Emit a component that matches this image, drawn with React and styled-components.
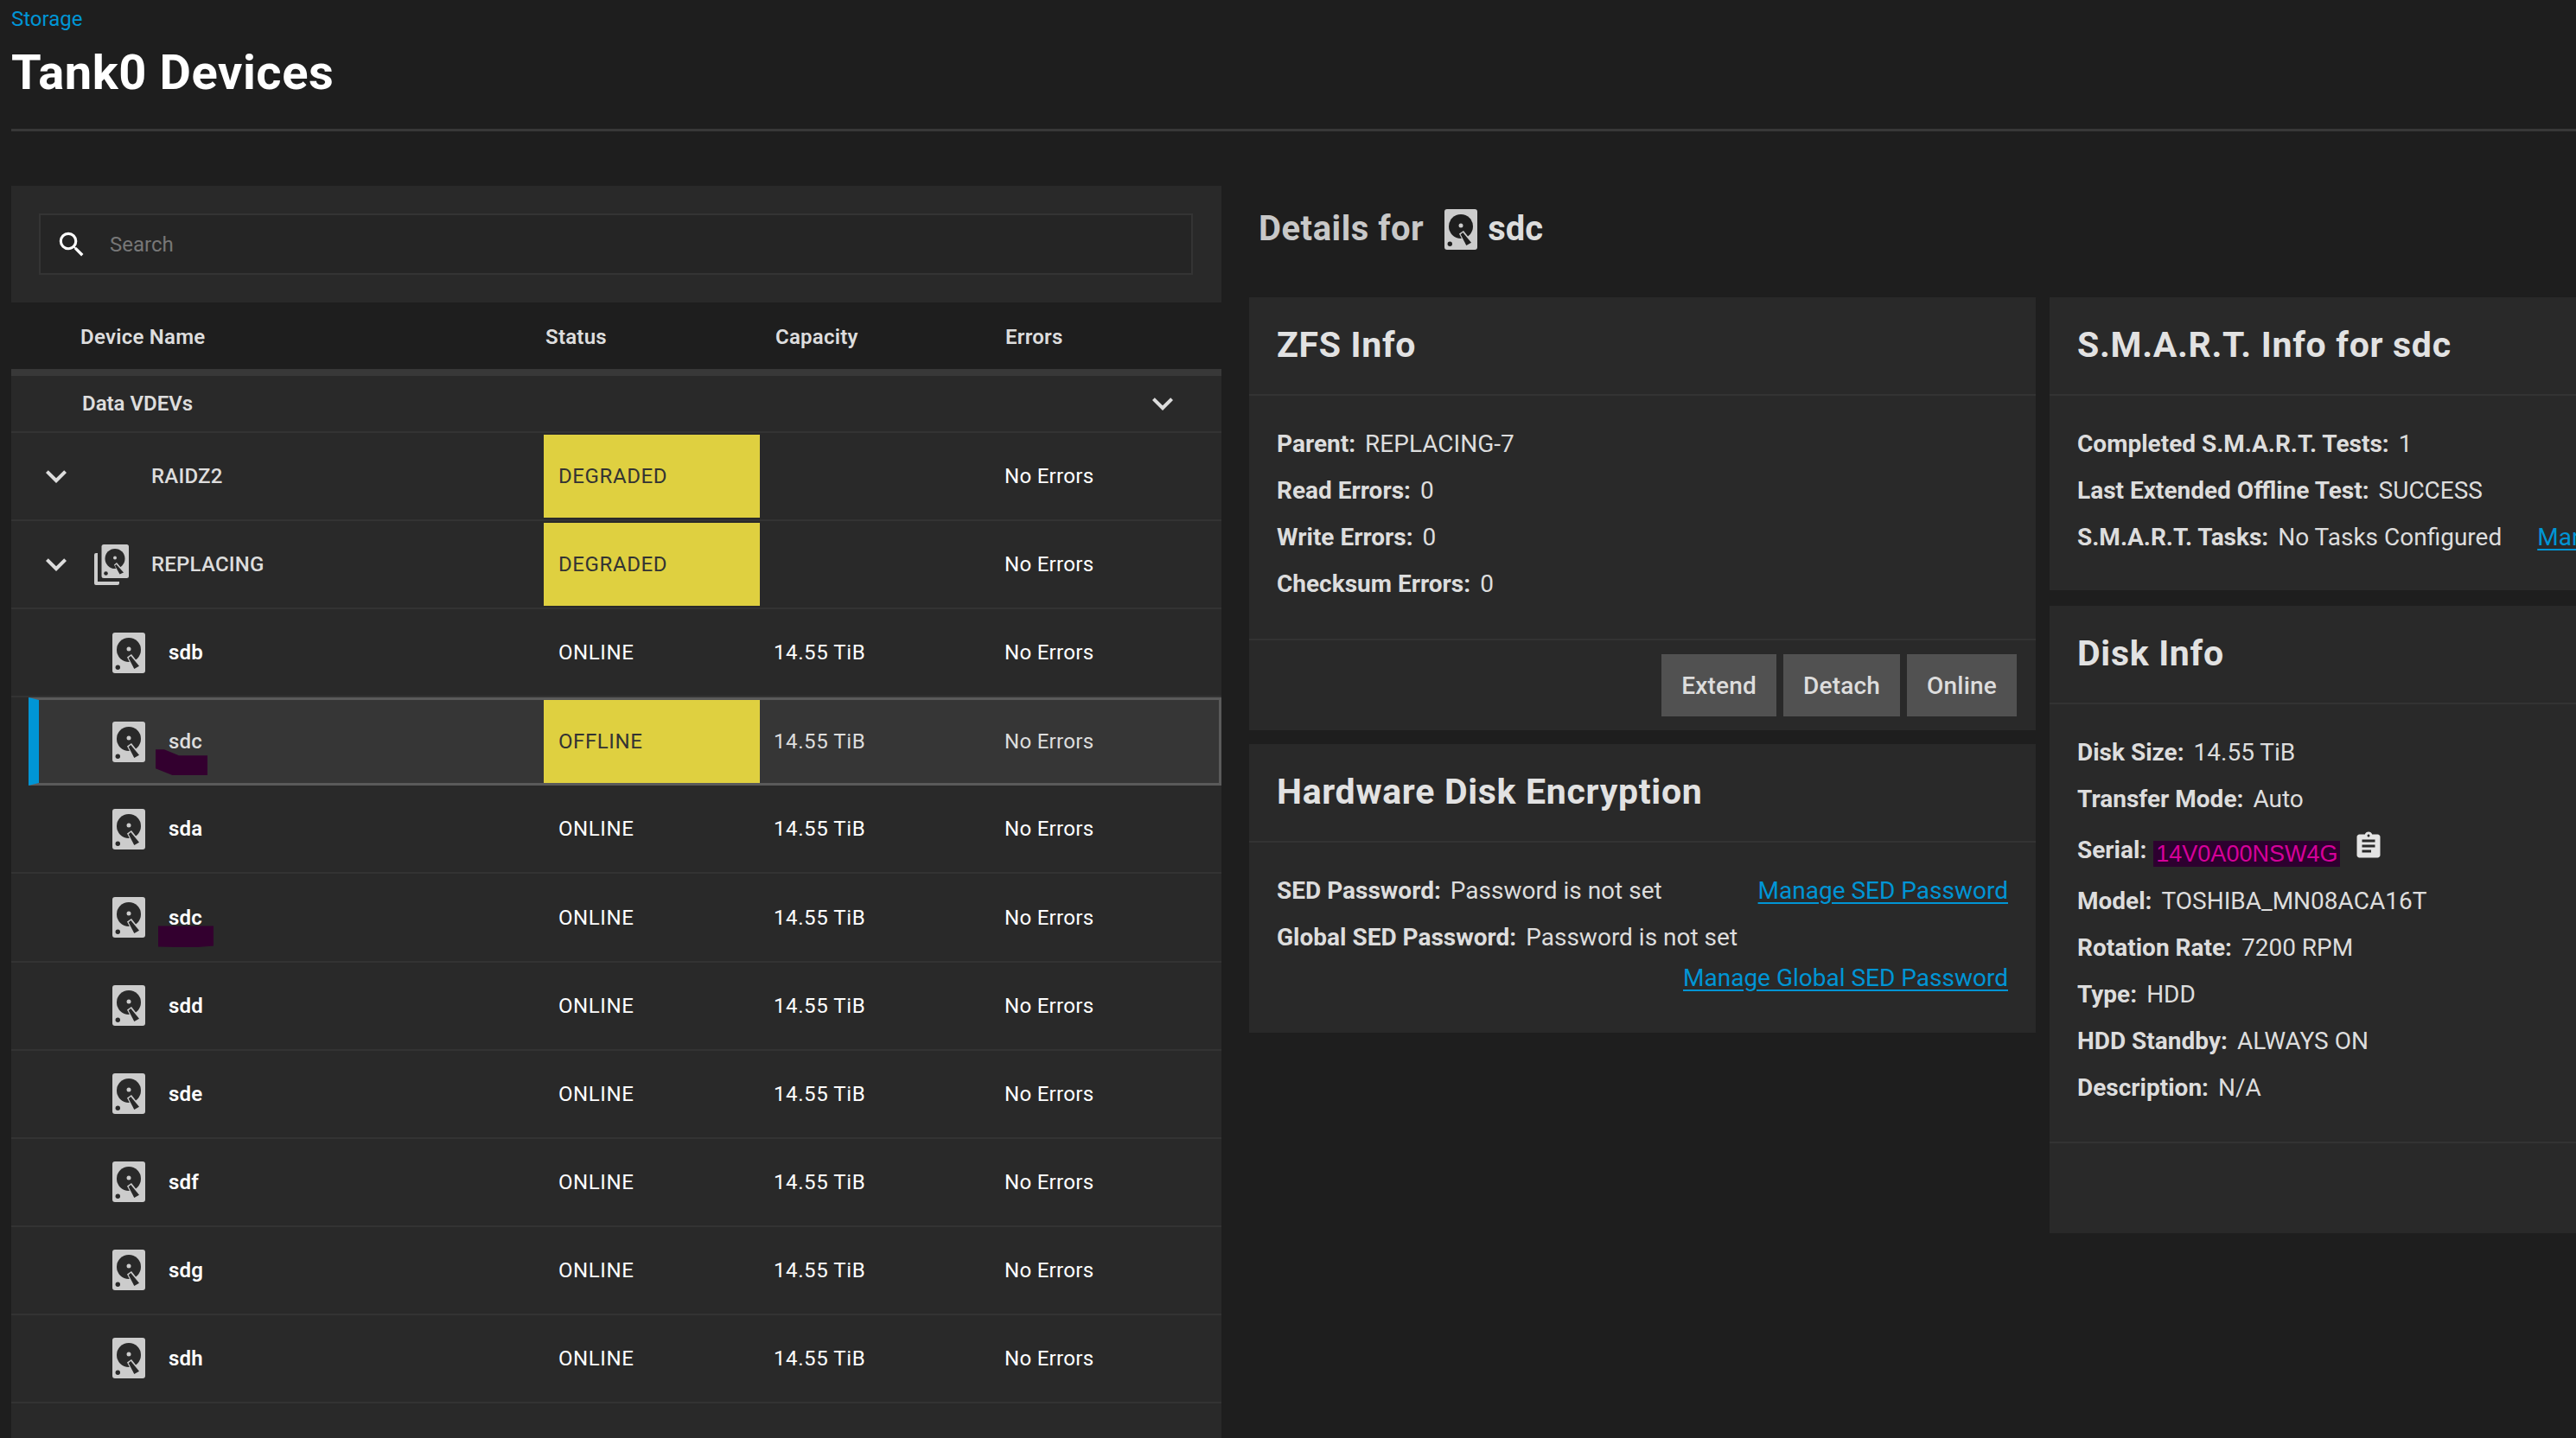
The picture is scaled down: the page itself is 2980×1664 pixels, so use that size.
import React from "react";
import styled, { createGlobalStyle } from "styled-components";
import { MdSearch, MdKeyboardArrowDown, MdAssignment } from "react-icons/md";

const Global = createGlobalStyle`
  html, body { margin: 0; padding: 0; background: #1e1e1e; }
  body { font-family: Roboto, "Liberation Sans", sans-serif; color: #ddd; }
  * { box-sizing: border-box; }
`;

const Page = styled.div`
  width: 2980px;
  height: 1664px;
  overflow: hidden;
  padding-left: 13px;
  background: #1e1e1e;
`;
const Crumb = styled.a`
  display: block;
  padding-top: 8px;
  height: 36px;
  line-height: 28px;
  font-size: 24px;
  color: #0095d5;
`;
const Title = styled.h1`
  margin: 16px 0 0;
  height: 64px;
  line-height: 64px;
  font-size: 56px;
  font-weight: 700;
  letter-spacing: 0.6px;
  color: #fff;
`;
const Divider = styled.div`
  margin-top: 33px;
  height: 3px;
  background: #383838;
`;
const Main = styled.div`
  margin-top: 63px;
  display: flex;
  gap: 32px;
  height: 1449px;
`;
const LeftPanel = styled.section`
  flex: 0 0 1400px;
  display: flex;
  flex-direction: column;
  background: #292929;
`;
const SearchBar = styled.div`
  height: 135px;
  padding: 32px;
`;
const SearchBox = styled.div`
  width: 1335px;
  height: 71px;
  display: flex;
  align-items: center;
  border: 2px solid #343434;
  background: #252525;
  color: #fff;
  padding-left: 17px;
  gap: 25px;
  font-size: 24px;
  svg { flex: none; }
`;
const Placeholder = styled.span`
  color: #777;
`;
const Grid = styled.div`
  display: grid;
  grid-template-columns: ${(p) => (p.$selected ? "584px" : "616px")} 250px 267px 1fr;
`;
const HeadRow = styled(Grid)`
  height: 85px;
  padding-top: 3px;
  background: #1e1e1e;
  border-bottom: 8px solid #383838;
  align-items: center;
  font-size: 24px;
  font-weight: 600;
  letter-spacing: 0.25px;
  color: #ddd;
`;
const HeadCell = styled.div`
  padding-left: ${(p) => p.$pad}px;
`;
const GroupRow = styled.div`
  height: 66px;
  display: flex;
  align-items: center;
  justify-content: space-between;
  padding: 0 44px 0 82px;
  border-bottom: 2px solid #333;
  font-size: 24px;
  font-weight: 600;
  color: #ddd;
`;
const Row = styled(Grid)`
  height: 102.1px;
  margin-left: ${(p) => (p.$selected ? "20px" : "0")};
  border-bottom: 2px solid #333;
  font-size: 24px;
  color: ${(p) => (p.$selected ? "#ddd" : "#fff")};
  background: ${(p) => (p.$selected ? "#363636" : "transparent")};
  ${(p) =>
    p.$selected &&
    `border-top: 3px solid #5a5a5a; border-right: 3px solid #5a5a5a; border-bottom: 3px solid #5a5a5a; border-left: 12px solid #0095d5;`}
`;
const NameCell = styled.div`
  position: relative;
  display: flex;
  align-items: center;
  padding-left: ${(p) => p.$pad}px;
  font-weight: ${(p) => p.$weight};
  letter-spacing: 0.2px;
  color: ${(p) => p.$color};
`;
const Caret = styled.span`
  display: flex;
  width: 48px;
  margin-right: ${(p) => p.$gap}px;
  color: #ddd;
`;
const IconSlot = styled.span`
  display: flex;
  margin-right: ${(p) => p.$gap}px;
`;
const Redact = styled.span`
  position: absolute;
  left: ${(p) => p.$x}px;
  top: ${(p) => p.$y}px;
  width: ${(p) => p.$w}px;
  height: ${(p) => p.$h}px;
  background: #33002f;
  clip-path: polygon(${(p) => p.$shape});
`;
const StatusCell = styled.div`
  display: flex;
  align-items: center;
  padding-left: 17px;
  letter-spacing: 0.6px;
  color: ${(p) => (p.$warn ? "#333" : "inherit")};
  background: ${(p) => (p.$warn ? "#dfd040" : "transparent")};
  margin: ${(p) => (p.$warn && !p.$selected ? "2px 0 2px" : "0")};
`;
const Cell = styled.div`
  display: flex;
  align-items: center;
  padding-left: 16px;
  letter-spacing: ${(p) => p.$track || 0.3}px;
`;
const RightPanel = styled.section`
  flex: none;
  width: 1700px;
`;
const DetailsTitle = styled.div`
  height: 129px;
  padding: 25px 0 0 11px;
  display: flex;
  align-items: flex-start;
  font-size: 40px;
  font-weight: 700;
  letter-spacing: 0.5px;
  color: #c8c8c8;
  line-height: 50px;
`;
const DetailsName = styled.span`
  display: flex;
  align-items: center;
  gap: 12px;
  margin-left: 24px;
  color: #ddd;
  letter-spacing: 0;
`;
const Columns = styled.div`
  display: flex;
  gap: 16px;
  align-items: flex-start;
`;
const Column = styled.div`
  flex: 0 0 ${(p) => p.$w}px;
  display: flex;
  flex-direction: column;
  gap: ${(p) => p.$gap}px;
`;
const Card = styled.article`
  background: #292929;
`;
const CardHead = styled.h2`
  margin: 0;
  height: 114px;
  line-height: 110px;
  padding-left: 32px;
  border-bottom: 2px solid #333;
  font-size: 41px;
  font-weight: 700;
  letter-spacing: 0.7px;
  color: #e2e2e2;
`;
const CardBody = styled.div`
  padding: 28px 32px ${(p) => p.$bottom}px;
  font-size: 28px;
  color: #ddd;
`;
const Line = styled.div`
  height: ${(p) => p.$h || 54}px;
  display: flex;
  align-items: center;
  white-space: nowrap;
  justify-content: ${(p) => p.$justify || "flex-start"};
`;
const Label = styled.strong`
  font-weight: 700;
  margin-right: 11px;
`;
const TextLink = styled.a`
  color: #0095d5;
  text-decoration: underline;
  text-underline-offset: 4px;
  margin-left: ${(p) => p.$gap || 0}px;
  white-space: nowrap;
`;
const Serial = styled.span`
  position: relative;
  top: 5px;
  margin-left: -3px;
  padding: 0 3px;
  background: #2d002f;
  color: #d6009a;
  font-size: 27px;
  line-height: 30px;
  font-family: "Liberation Sans", sans-serif;
`;
const Copy = styled.span`
  display: flex;
  margin-left: 15px;
  position: relative;
  top: -4px;
  color: #e4e4e4;
`;
const CardFoot = styled.div`
  height: ${(p) => p.$h}px;
  border-top: 2px solid #333;
  display: flex;
  justify-content: flex-end;
  gap: 8px;
  padding: 16px 22px 0 0;
`;
const Btn = styled.button`
  height: 72px;
  padding: 0 23px;
  border: 0;
  background: #515151;
  color: #ddd;
  letter-spacing: 0.2px;
  font: 500 28px Roboto, sans-serif;
`;

const DiskIcon = ({ hole = "#292929" }) => (
  <svg width="38" height="47" viewBox="0 0 38 47">
    <rect width="38" height="47" rx="3" fill="#ccc" />
    <circle cx="19" cy="20" r="14" fill={hole} />
    <circle cx="19" cy="19" r="2.5" fill="#ccc" />
    <polygon points="17,28.5 22,25 33,39 25,44" fill="#ccc" />
    <polygon points="21.3,27 31,38.7 25.3,42 18.7,29.3" fill={hole} />
    <circle cx="6.3" cy="40.3" r="2.7" fill={hole} />
  </svg>
);

const StackIcon = () => (
  <svg width="40" height="47" viewBox="0 0 40 47">
    <path d="M0 12a2 2 0 0 1 2-2h2v33h25v2a2 2 0 0 1-2 2H2a2 2 0 0 1-2-2z" fill="#ccc" />
    <rect x="8.5" width="31.5" height="39" rx="2.5" fill="#ccc" />
    <circle cx="24" cy="16.5" r="11.5" fill="#292929" />
    <circle cx="24" cy="15.5" r="2" fill="#ccc" />
    <polygon points="23,23.5 26,21 36,33 29,36" fill="#ccc" />
    <polygon points="25.5,23 34,32.5 29.5,34.5 24,24.5" fill="#292929" />
    <circle cx="13.5" cy="33.5" r="2.3" fill="#292929" />
  </svg>
);

const disks = [
  { name: "sdb", status: "ONLINE" },
  { name: "sdc", status: "OFFLINE", selected: true },
  { name: "sda", status: "ONLINE" },
  { name: "sdc", status: "ONLINE", mark: true },
  { name: "sdd", status: "ONLINE" },
  { name: "sde", status: "ONLINE" },
  { name: "sdf", status: "ONLINE" },
  { name: "sdg", status: "ONLINE" },
  { name: "sdh", status: "ONLINE" },
];

const Field = ({ k, v }) => (
  <Line>
    <Label>{k}</Label>
    {v}
  </Line>
);

export default function App() {
  return (
    <Page>
      <Global />
      <Crumb>Storage</Crumb>
      <Title>Tank0 Devices</Title>
      <Divider />
      <Main>
        <LeftPanel>
          <SearchBar>
            <SearchBox>
              <MdSearch size={38} />
              <Placeholder>Search</Placeholder>
            </SearchBox>
          </SearchBar>
          <HeadRow>
            <HeadCell $pad={80}>Device Name</HeadCell>
            <HeadCell $pad={2}>Status</HeadCell>
            <HeadCell $pad={18}>Capacity</HeadCell>
            <HeadCell $pad={17}>Errors</HeadCell>
          </HeadRow>
          <GroupRow>
            Data VDEVs
            <MdKeyboardArrowDown size={48} color="#ddd" />
          </GroupRow>
          <Row>
            <NameCell $pad={28} $weight={500} $color="#ddd">
              <Caret $gap={86}><MdKeyboardArrowDown size={48} /></Caret>
              RAIDZ2
            </NameCell>
            <StatusCell $warn>DEGRADED</StatusCell>
            <Cell />
            <Cell>No Errors</Cell>
          </Row>
          <Row>
            <NameCell $pad={28} $weight={500} $color="#ddd">
              <Caret $gap={20}><MdKeyboardArrowDown size={48} /></Caret>
              <IconSlot $gap={26}><StackIcon /></IconSlot>
              REPLACING
            </NameCell>
            <StatusCell $warn>DEGRADED</StatusCell>
            <Cell />
            <Cell>No Errors</Cell>
          </Row>
          {disks.map((d, i) => (
            <Row key={i} $selected={d.selected}>
              <NameCell $pad={d.selected ? 85 : 117} $weight={d.selected ? 500 : 600}>
                <IconSlot $gap={27}><DiskIcon /></IconSlot>
                {d.name}
                {d.selected && <Redact $x={135} $y={57} $w={60} $h={30} $shape="0 0, 10px 0, 27px 7px, 60px 7px, 60px 30px, 20px 30px, 0 22px" />}
                {d.mark && <Redact $x={170} $y={60} $w={64} $h={25} $shape="0 0, 64px 0, 64px 23px, 40px 25px, 0 24px" />}
              </NameCell>
              <StatusCell $warn={d.status === "OFFLINE"} $selected={d.selected}>{d.status}</StatusCell>
              <Cell $track={0.6}>14.55 TiB</Cell>
              <Cell>No Errors</Cell>
            </Row>
          ))}
        </LeftPanel>
        <RightPanel>
          <DetailsTitle>
            Details for
            <DetailsName><DiskIcon hole="#1e1e1e" />sdc</DetailsName>
          </DetailsTitle>
          <Columns>
            <Column $w={910} $gap={16}>
              <Card>
                <CardHead>ZFS Info</CardHead>
                <CardBody $bottom={37}>
                  <Field k="Parent:" v="REPLACING-7" />
                  <Field k="Read Errors:" v="0" />
                  <Field k="Write Errors:" v="0" />
                  <Field k="Checksum Errors:" v="0" />
                </CardBody>
                <CardFoot $h={106}>
                  <Btn>Extend</Btn>
                  <Btn>Detach</Btn>
                  <Btn>Online</Btn>
                </CardFoot>
              </Card>
              <Card>
                <CardHead>Hardware Disk Encryption</CardHead>
                <CardBody $bottom={44}>
                  <Line $justify="space-between">
                    <span><Label>SED Password:</Label>Password is not set</span>
                    <TextLink>Manage SED Password</TextLink>
                  </Line>
                  <Field k="Global SED Password:" v="Password is not set" />
                  <Line $h={40} $justify="flex-end">
                    <TextLink>Manage Global SED Password</TextLink>
                  </Line>
                </CardBody>
              </Card>
            </Column>
            <Column $w={700} $gap={18}>
              <Card>
                <CardHead>S.M.A.R.T. Info for sdc</CardHead>
                <CardBody $bottom={35}>
                  <Field k="Completed S.M.A.R.T. Tests:" v="1" />
                  <Field k="Last Extended Offline Test:" v="SUCCESS" />
                  <Line>
                    <Label>S.M.A.R.T. Tasks:</Label>No Tasks Configured
                    <TextLink $gap={41}>Manage S.M.A.R.T. Tasks</TextLink>
                  </Line>
                </CardBody>
              </Card>
              <Card>
                <CardHead>Disk Info</CardHead>
                <CardBody $bottom={36}>
                  <Field k="Disk Size:" v="14.55 TiB" />
                  <Field k="Transfer Mode:" v="Auto" />
                  <Line $h={64}>
                    <Label>Serial:</Label>
                    <Serial>14V0A00NSW4G</Serial>
                    <Copy><MdAssignment size={36} /></Copy>
                  </Line>
                  <Field k="Model:" v="TOSHIBA_MN08ACA16T" />
                  <Field k="Rotation Rate:" v="7200 RPM" />
                  <Field k="Type:" v="HDD" />
                  <Field k="HDD Standby:" v="ALWAYS ON" />
                  <Field k="Description:" v="N/A" />
                </CardBody>
                <CardFoot $h={106} />
              </Card>
            </Column>
          </Columns>
        </RightPanel>
      </Main>
    </Page>
  );
}
